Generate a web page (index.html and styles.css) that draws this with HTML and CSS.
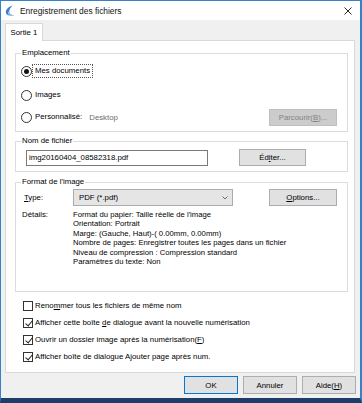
FILE: index.html
```html
<!DOCTYPE html>
<html lang="fr">
<head>
<meta charset="utf-8">
<title>Enregistrement des fichiers</title>
<link rel="stylesheet" href="styles.css">
</head>
<body>
<div class="window">
  <div class="titlebar">
    <svg class="app-icon" width="10" height="11" viewBox="0 0 10 11">
      <path d="M7.5 0.5 C4 1.5 1 4 0.8 7 C0.7 9 2.5 10.6 5 10.6 L9.5 10.6 C6.5 10 4.2 8.8 4.2 6.8 C4.2 4.6 5.8 2.2 7.5 0.5 Z" fill="#3d7fd0"/>
      <path d="M4.2 6.8 C4.2 8.8 6.5 10 9.5 10.6 L6 10.6 C3.6 10.2 2.6 8.6 3 6.8 Z" fill="#9cc4ee"/>
    </svg>
    <span class="title">Enregistrement des fichiers</span>
    <svg class="close" width="8" height="8" viewBox="0 0 8 8">
      <path d="M0.5 0.5 L7.5 7.5 M7.5 0.5 L0.5 7.5" stroke="#111" stroke-width="0.9" fill="none"/>
    </svg>
  </div>
  <div class="body">
    <div class="tabs"><div class="tab">Sortie 1</div></div>
    <div class="panel">
      <fieldset class="group g-location">
        <legend>Emplacement</legend>
        <div class="row r-first"><span class="radio checked"></span><span class="label focus">Mes documents</span></div>
        <div class="row r-second"><span class="radio"></span><span class="label">Images</span></div>
        <div class="row r-third">
          <span class="radio"></span><span class="label">Personnalisé:</span>
          <span class="path">Desktop</span>
          <span class="btn btn-disabled btn-side">Parcourir(<u>B</u>)...</span>
        </div>
      </fieldset>
      <fieldset class="group g-name">
        <legend>Nom de fichier</legend>
        <div class="row r-name">
          <span class="input">img20160404_08582318.pdf</span>
          <span class="btn btn-edit">Éd<u>i</u>ter...</span>
        </div>
      </fieldset>
      <fieldset class="group g-format">
        <legend>Format de l'image</legend>
        <div class="row r-type">
          <span class="field-label"><u>T</u>ype:</span>
          <span class="select">PDF (*.pdf)
            <svg class="chev" width="6" height="4" viewBox="0 0 6 4"><path d="M0.5 0.5 L3 3 L5.5 0.5" stroke="#606060" stroke-width="0.9" fill="none"/></svg>
          </span>
          <span class="btn btn-side"><u>O</u>ptions...</span>
        </div>
        <div class="details">
          <span class="field-label details-label">Détails:</span>
          <div class="details-text">
            <div>Format du papier: Taille réelle de l'image</div>
            <div>Orientation: Portrait</div>
            <div>Marge: (Gauche, Haut)-( 0.00mm, 0.00mm)</div>
            <div>Nombre de pages: Enregistrer toutes les pages dans un fichier</div>
            <div>Niveau de compression : Compression standard</div>
            <div>Paramètres du texte: Non</div>
          </div>
        </div>
      </fieldset>
      <div class="checks">
        <div class="check-row"><span class="checkbox"></span><span class="label">Reno<u>m</u>mer tous les fichiers de même nom</span></div>
        <div class="check-row"><span class="checkbox checked"></span><span class="label">Afficher cette boîte <u>d</u>e dialogue avant la nouvelle numérisation</span></div>
        <div class="check-row"><span class="checkbox checked"></span><span class="label">Ouvrir un dossier image après la numérisation(<u>F</u>)</span></div>
        <div class="check-row"><span class="checkbox checked"></span><span class="label">Afficher boîte de dialogue Ajouter page après num.</span></div>
      </div>
    </div>
    <div class="buttons">
      <span class="btn btn-foot btn-default">OK</span>
      <span class="btn btn-foot">Annuler</span>
      <span class="btn btn-foot">Aide(<u>H</u>)</span>
    </div>
  </div>
</div>
</body>
</html>
```
FILE: styles.css
```css
* { box-sizing: border-box; }
html, body { margin: 0; padding: 0; }
body {
  width: 362px;
  height: 403px;
  font-family: "Liberation Sans", Arial, sans-serif;
  font-size: 7.8px;
  color: #000;
  background: #fff;
}
u { text-decoration: underline; text-underline-offset: 1px; }

.window {
  width: 362px;
  height: 403px;
  border-top: 1px solid #3a80c9;
  border-left: 1px solid #3a80c9;
  border-right: 2px solid #3a80c9;
  border-bottom: 5px solid #1c3e69;
  background: #f0f0f0;
  display: flex;
  flex-direction: column;
}

.titlebar {
  height: 19px;
  background: #fff;
  display: flex;
  align-items: center;
  padding-left: 4px;
}
.app-icon { flex: none; }
.title {
  margin-left: 5px;
  font-size: 8.4px;
  color: #111;
}
.close { margin-left: auto; margin-right: 8px; flex: none; }

.body { flex: 1; display: flex; flex-direction: column; }

.tabs { display: flex; padding-left: 4px; margin-top: 3px; }
.tab {
  position: relative;
  z-index: 1;
  height: 18px;
  width: 38px;
  margin-bottom: -1px;
  background: #fff;
  border: 1px solid #d9d9d9;
  border-bottom: none;
  display: flex;
  align-items: center;
  justify-content: center;
  padding-bottom: 1px;
}

.panel {
  margin-left: 4px;
  width: 350px;
  height: 333px;
  background: #fff;
  border: 1px solid #d9d9d9;
  padding: 7px 6px 0 9px;
}

.group {
  margin: 0;
  min-width: 0;
  border: 1px solid #dcdcdc;
  padding: 0 10px 5px 6px;
}
.group legend {
  padding: 0 1px;
  margin-left: -1px;
  line-height: 10px;
  height: 10px;
}

.row { display: flex; align-items: center; }
.g-location { padding-top: 6px; }
.r-first { height: 14px; }
.r-second { height: 14px; margin-top: 10px; }
.r-third { height: 18px; margin-top: 6px; }

.radio {
  flex: none;
  width: 11px;
  height: 11px;
  margin-left: -1px;
  border: 1px solid #333;
  border-radius: 50%;
  background: #fff;
  display: flex;
  align-items: center;
  justify-content: center;
}
.radio.checked::after {
  content: "";
  width: 5px;
  height: 5px;
  border-radius: 50%;
  background: #111;
}
.row .label { margin-left: 3px; line-height: 10px; }
.focus {
  outline: 1px dotted #555;
  outline-offset: 1px;
  padding: 0 1px;
  margin-left: 2px !important;
}
.path { margin-left: 7px; color: #6d6d6d; }

.btn {
  flex: none;
  display: flex;
  align-items: center;
  justify-content: center;
  background: #e1e1e1;
  border: 1px solid #adadad;
  height: 17px;
  color: #000;
}
.btn-side { margin-left: auto; width: 68px; }
.btn-disabled { background: #cccccc; border-color: #bfbfbf; color: #838383; }

.g-name { margin-top: 4px; padding-top: 3px; }
.r-name { height: 17px; }
.input {
  width: 182px;
  height: 16px;
  margin-left: 4px;
  border: 1px solid #7a7a7a;
  background: #fff;
  display: flex;
  align-items: center;
  padding-left: 2px;
}
.btn-edit { width: 67px; margin-left: 31px; }

.g-format { margin-top: 5px; padding-top: 2px; padding-bottom: 24px; }
.r-type { height: 17px; }
.field-label { flex: none; width: 51px; padding-left: 2px; }
.select {
  width: 160px;
  height: 17px;
  background: #e5e5e5;
  border: 1px solid #acacac;
  display: flex;
  align-items: center;
  padding-left: 5px;
}
.chev { margin-left: auto; margin-right: 4px; }

.details { display: flex; margin-top: 4px; height: 57px; }
.details-label { padding-left: 0; line-height: 9.4px; }
.details-text { font-size: 7.7px; line-height: 9.4px; }

.checks { margin-top: 7px; }
.check-row { display: flex; align-items: center; height: 13px; margin-top: 4px; }
.check-row:first-child { margin-top: 0; }
.checkbox {
  flex: none;
  width: 10px;
  height: 10px;
  margin-left: 8px;
  border: 1px solid #333;
  background: #fff;
  position: relative;
}
.checkbox.checked::after {
  content: "";
  position: absolute;
  left: 2.5px;
  top: 0px;
  width: 3px;
  height: 6px;
  border-right: 1px solid #222;
  border-bottom: 1px solid #222;
  transform: rotate(40deg);
}
.check-row .label { margin-left: 2px; }

.buttons {
  display: flex;
  justify-content: flex-end;
  gap: 5px;
  margin-top: 3px;
  padding-right: 4px;
}
.btn-foot { width: 54px; height: 18px; }
.btn-default { border-color: #0078d7; }
```
